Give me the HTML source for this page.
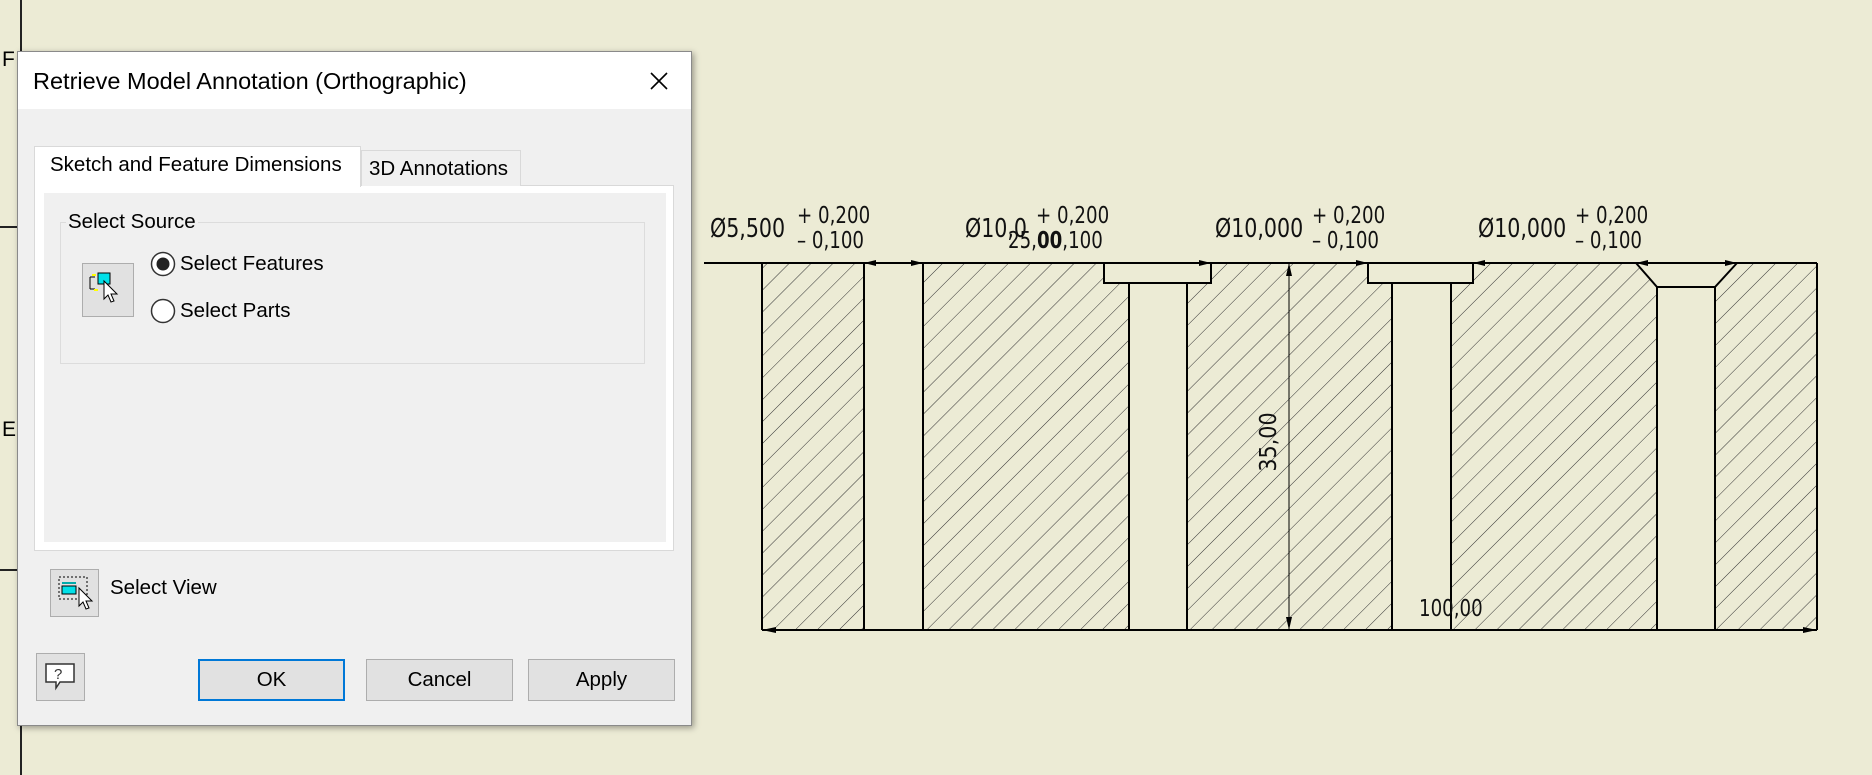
<!DOCTYPE html>
<html><head><meta charset="utf-8"><style>
*{margin:0;padding:0;box-sizing:border-box}
body{width:1872px;height:775px;background:#ecebd5;position:relative;overflow:hidden;font-family:"Liberation Sans",sans-serif}
.a{position:absolute}
.dlg{left:17px;top:51px;width:675px;height:675px;background:#f0f0f0;border:1px solid #8a8a8a;box-shadow:2px 2px 6px rgba(0,0,0,.35)}
.t{font-size:20.5px;color:#000;white-space:nowrap}
.btn{background:#e1e1e1;border:1px solid #adadad;text-align:center;font-size:20.5px}
.dim{font-family:"Liberation Sans Narrow","DejaVu Sans Condensed",sans-serif;font-size:26px;color:#111;white-space:nowrap;line-height:1;transform:scaleX(.88);transform-origin:0 0}
</style></head><body>
<div class="a" style="left:20px;top:0;width:2px;height:775px;background:#222"></div>
<div class="a" style="left:0;top:226px;width:21px;height:2px;background:#222"></div>
<div class="a" style="left:0;top:569px;width:21px;height:2px;background:#222"></div>
<div class="a t" style="left:2px;top:48px;font-size:21px">F</div>
<div class="a t" style="left:2px;top:418px;font-size:21px">E</div>

<svg class="a" style="left:0;top:0" width="1872" height="775">
<defs><pattern id="h" width="15.5" height="40" patternUnits="userSpaceOnUse" patternTransform="rotate(45)"><line x1="0" y1="0" x2="0" y2="40" stroke="#333" stroke-width="1"/></pattern></defs>
<g fill="url(#h)">
<rect x="762" y="263" width="102" height="367"/>
<rect x="923" y="263" width="206" height="367"/>
<rect x="1187" y="263" width="205" height="367"/>
<rect x="1451" y="263" width="206" height="367"/>
<rect x="1715" y="263" width="102" height="367"/>
</g>
<g fill="#ecebd5">
<rect x="1104" y="263" width="107" height="20"/>
<rect x="1368" y="263" width="105" height="20"/>
<polygon points="1636,263 1737,263 1715,287 1657,287"/>
</g>
<g stroke="#000" stroke-width="2" fill="none">
<line x1="704" y1="263" x2="1817" y2="263"/>
<line x1="762" y1="263" x2="762" y2="630"/>
<line x1="1817" y1="263" x2="1817" y2="630"/>
<line x1="762" y1="630" x2="1817" y2="630"/>
<line x1="864" y1="263" x2="864" y2="630"/>
<line x1="923" y1="263" x2="923" y2="630"/>
<line x1="1129" y1="283" x2="1129" y2="630"/>
<line x1="1187" y1="283" x2="1187" y2="630"/>
<line x1="1392" y1="283" x2="1392" y2="630"/>
<line x1="1451" y1="283" x2="1451" y2="630"/>
<line x1="1657" y1="287" x2="1657" y2="630"/>
<line x1="1715" y1="287" x2="1715" y2="630"/>
<polyline points="1104,263 1104,283 1211,283 1211,263"/>
<polyline points="1368,263 1368,283 1473,283 1473,263"/>
<polyline points="1636,263 1657,287 1715,287 1737,263"/>
</g>
<line x1="1289" y1="263" x2="1289" y2="630" stroke="#000" stroke-width="1"/>
<g fill="#000">
<polygon points="864,263 876,260 876,266"/><polygon points="923,263 911,260 911,266"/>
<polygon points="1211,263 1199,260 1199,266"/><polygon points="1368,263 1356,260 1356,266"/>
<polygon points="1473,263 1485,260 1485,266"/><polygon points="1636,263 1648,260 1648,266"/>
<polygon points="1737,263 1725,260 1725,266"/>
<polygon points="762,630 776,627 776,633"/><polygon points="1817,630 1803,627 1803,633"/>
<polygon points="1289,263 1286,276 1292,276"/><polygon points="1289,630 1286,617 1292,617"/>
</g>
</svg>

<div class="a dim" style="left:710px;top:216px">Ø5,500</div>
<div class="a dim" style="left:797px;top:205px;font-size:23px">+ 0,200</div>
<div class="a dim" style="left:797px;top:230px;font-size:23px">– 0,100</div>
<div class="a dim" style="left:965px;top:216px">Ø10,0</div>
<div class="a dim" style="left:1036px;top:205px;font-size:23px">+ 0,200</div>
<div class="a dim" style="left:1008px;top:230px;font-size:23px">25,<b>00</b>,100</div>
<div class="a dim" style="left:1215px;top:216px">Ø10,000</div>
<div class="a dim" style="left:1312px;top:205px;font-size:23px">+ 0,200</div>
<div class="a dim" style="left:1312px;top:230px;font-size:23px">– 0,100</div>
<div class="a dim" style="left:1478px;top:216px">Ø10,000</div>
<div class="a dim" style="left:1575px;top:205px;font-size:23px">+ 0,200</div>
<div class="a dim" style="left:1575px;top:230px;font-size:23px">– 0,100</div>
<div class="a dim" style="left:1419px;top:598px;font-size:23px">100,00</div>
<div class="a" style="left:1239px;top:430px;width:60px;height:24px;text-align:center;font-family:'Liberation Sans Narrow','DejaVu Sans Condensed',sans-serif;font-size:23px;line-height:24px;color:#111;transform:rotate(-90deg);transform-origin:center">35,00</div>

<div class="a dlg">
 <div class="a" style="left:0;top:0;width:673px;height:57px;background:#fff"></div>
 <div class="a t" style="left:15px;top:16px;font-size:23.5px">Retrieve Model Annotation (Orthographic)</div>
 <svg class="a" style="left:632px;top:20px" width="18" height="18"><path d="M1 1L17 17M17 1L1 17" stroke="#000" stroke-width="1.6"/></svg>
 <div class="a" style="left:16px;top:133px;width:640px;height:366px;background:#fff;border:1px solid #d9d9d9"></div>
 <div class="a" style="left:343px;top:98px;width:160px;height:36px;background:#f0f0f0;border:1px solid #d9d9d9;border-bottom:none"></div>
 <div class="a t" style="left:351px;top:105px">3D Annotations</div>
 <div class="a" style="left:16px;top:94px;width:327px;height:41px;background:#fff;border:1px solid #d9d9d9;border-bottom:none"></div>
 <div class="a t" style="left:32px;top:101px">Sketch and Feature Dimensions</div>
 <div class="a" style="left:26px;top:141px;width:622px;height:349px;background:#f0f0f0"></div>
 <div class="a" style="left:42px;top:170px;width:585px;height:142px;border:1px solid #dcdcdc"></div>
 <div class="a t" style="left:48px;top:158px;background:#f0f0f0;padding:0 2px">Select Source</div>
 <div class="a" style="left:64px;top:211px;width:52px;height:54px;background:#e1e1e1;border:1px solid #adadad"></div>
 <svg class="a" style="left:70px;top:217px" width="40" height="40"><rect x="10" y="4" width="12" height="11" fill="#00e0e8" stroke="#000"/><path d="M2 8h5M2 8v12M2 20h5" stroke="#000" fill="none"/><rect x="4" y="5" width="4" height="2" fill="#ff0"/><rect x="6" y="20" width="4" height="2" fill="#ff0"/><path d="M16 12v18l4-4 3 7 3-1-3-7h6z" fill="#fff" stroke="#000"/></svg>
 <svg class="a" style="left:132px;top:199px" width="28" height="28"><circle cx="13" cy="13" r="11.5" fill="#fff" stroke="#333" stroke-width="1.5"/><circle cx="13" cy="13" r="6.5" fill="#222"/></svg>
 <div class="a t" style="left:162px;top:200px">Select Features</div>
 <svg class="a" style="left:132px;top:246px" width="28" height="28"><circle cx="13" cy="13" r="11.5" fill="#fff" stroke="#333" stroke-width="1.5"/></svg>
 <div class="a t" style="left:162px;top:247px">Select Parts</div>
 <div class="a" style="left:32px;top:517px;width:49px;height:48px;background:#e1e1e1;border:1px solid #adadad"></div>
 <svg class="a" style="left:36px;top:522px" width="40" height="38"><rect x="5" y="3" width="28" height="22" fill="none" stroke="#000" stroke-dasharray="2 2"/><rect x="8" y="12" width="14" height="8" fill="#00e0e8" stroke="#000"/><path d="M8 9h14" stroke="#0aa" stroke-width="2"/><path d="M25 14v18l4-4 3 7 3-1-3-7h6z" fill="#fff" stroke="#000"/></svg>
 <div class="a t" style="left:92px;top:524px">Select View</div>
 <div class="a" style="left:18px;top:601px;width:49px;height:48px;background:#e1e1e1;border:1px solid #adadad"></div>
 <svg class="a" style="left:26px;top:610px" width="34" height="30"><path d="M2 2h28v18H16l-4 6v-6H2z" fill="#fff" stroke="#333" stroke-width="1.5"/><text x="10" y="17" font-size="15" font-family="Liberation Sans" fill="#333">?</text></svg>
 <div class="a btn" style="left:180px;top:607px;width:147px;height:42px;border:2px solid #0078d7;line-height:38px">OK</div>
 <div class="a btn" style="left:348px;top:607px;width:147px;height:42px;line-height:40px">Cancel</div>
 <div class="a btn" style="left:510px;top:607px;width:147px;height:42px;line-height:40px">Apply</div>
</div>
</body></html>
